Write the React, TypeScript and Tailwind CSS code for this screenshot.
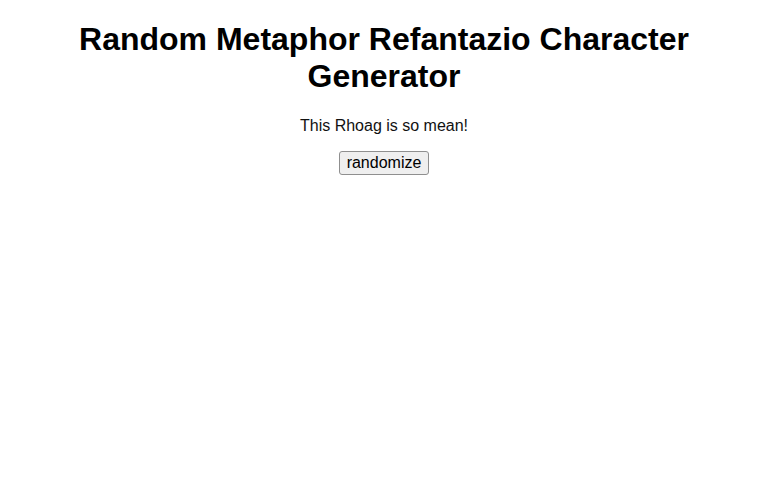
import { useState } from 'react';

const lines = ['This Rhoag is so mean!', 'This Rhoag is so brave!', 'This Clemar is so kind!'];

export default function App() {
  const [i, setI] = useState(0);

  return (
    <div className="min-h-screen bg-white text-black text-center font-['Liberation_Sans',Arial,sans-serif]">
      <div className="pt-[21.44px]">
        <h1 className="text-[32px] font-bold leading-[37px] px-[70px]">
          Random Metaphor Refantazio Character Generator
        </h1>
        <p className="mt-[21.44px] text-[16px] leading-[18.4px] text-[#111]">{lines[i]}</p>
        <div className="mt-[15.5px]">
          <button
            onClick={() => setI((i + 1) % lines.length)}
            className="inline-block border border-[#8f8f8f] bg-[#efefef] rounded-[3px] px-[7px] py-[1.5px] text-[16px] leading-[18.4px] text-black"
          >
            randomize
          </button>
        </div>
      </div>
    </div>
  );
}
